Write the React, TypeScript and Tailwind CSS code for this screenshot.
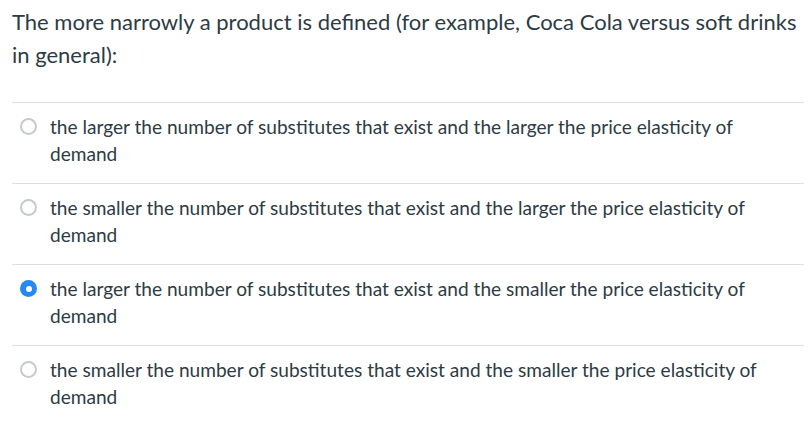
import React, { useState } from 'react';

const options = [
  'the larger the number of substitutes that exist and the larger the price elasticity of demand',
  'the smaller the number of substitutes that exist and the larger the price elasticity of demand',
  'the larger the number of substitutes that exist and the smaller the price elasticity of demand',
  'the smaller the number of substitutes that exist and the smaller the price elasticity of demand',
];

export default function App() {
  const [selected, setSelected] = useState(2);

  return (
    <div className="bg-white w-[812px] h-[427px] text-[#2d3b45] font-['Lato',sans-serif] px-3 pt-[5px]">
      <p className="text-[22px] leading-[33px] w-[785px]">
        The more narrowly a product is defined (for example, Coca Cola versus soft drinks in general):
      </p>
      <div className="mt-[31px] mr-[-4px]">
        {options.map((text, i) => (
          <label
            key={i}
            className="flex items-start border-t border-[#dddfe1] pt-[10px] h-[81px] cursor-pointer"
          >
            <span className="w-[38px] shrink-0 flex pl-[8px] pt-[5px]">
              {selected === i ? (
                <span className="w-[17px] h-[17px] rounded-full bg-[#2489f2] flex items-center justify-center">
                  <span className="w-[6px] h-[6px] rounded-full bg-white" />
                </span>
              ) : (
                <span className="w-[17px] h-[17px] rounded-full border-2 border-[#c6cacd] bg-white" />
              )}
            </span>
            <input
              type="radio"
              className="hidden"
              checked={selected === i}
              onChange={() => setSelected(i)}
            />
            <span className="text-[19.1px] leading-[27px] w-[730px]">{text}</span>
          </label>
        ))}
      </div>
    </div>
  );
}
